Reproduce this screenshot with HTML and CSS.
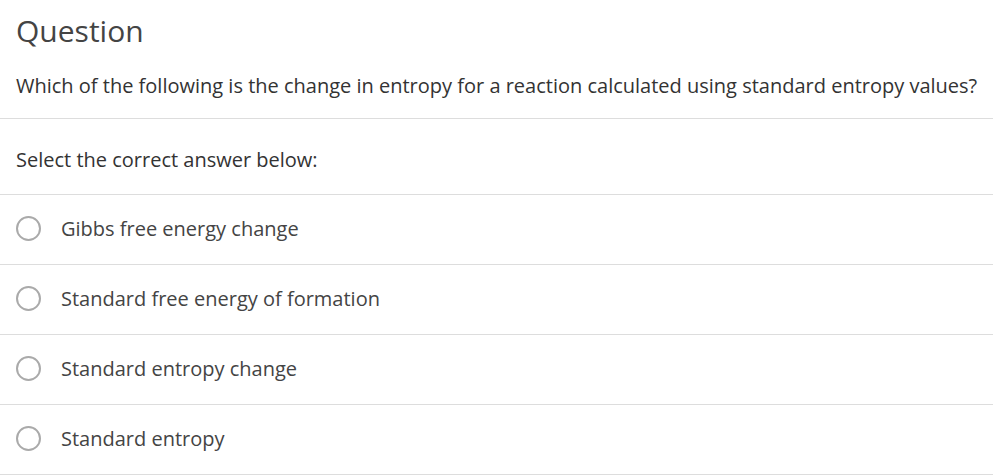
FILE: index.html
```html
<!DOCTYPE html>
<html>
<head>
<meta charset="utf-8">
<link rel="stylesheet" href="styles.css">
</head>
<body>
<div class="quiz">
  <div class="question">
    <h1 class="title">Question</h1>
    <p class="prompt">Which of the following is the change in entropy for a reaction calculated using standard entropy values?</p>
  </div>
  <div class="instructions">Select the correct answer below:</div>
  <ul class="options">
    <li class="option"><span class="radio"></span><span class="label">Gibbs free energy change</span></li>
    <li class="option"><span class="radio"></span><span class="label">Standard free energy of formation</span></li>
    <li class="option"><span class="radio"></span><span class="label">Standard entropy change</span></li>
    <li class="option"><span class="radio"></span><span class="label">Standard entropy</span></li>
  </ul>
</div>
</body>
</html>
```
FILE: styles.css
```css
html, body {
  margin: 0;
  padding: 0;
  background: #fff;
}
body {
  font-family: "Open Sans", "Liberation Sans", sans-serif;
  color: #333;
}
.quiz {
  width: 993px;
}
.question {
  border-bottom: 1px solid #ddd;
  padding: 0 0 0 16px;
  height: 118px;
  box-sizing: content-box;
}
.title {
  margin: 0;
  padding-top: 11px;
  font-size: 30px;
  font-weight: 400;
  line-height: 40px;
  color: #444;
}
.prompt {
  margin: 0;
  padding-top: 23px;
  font-size: 20px;
  line-height: 24px;
  white-space: nowrap;
  color: #333;
}
.instructions {
  border-bottom: 1px solid #ddd;
  padding: 6px 16px 0;
  box-sizing: border-box;
  height: 76px;
  display: flex;
  align-items: center;
  font-size: 20px;
  color: #333;
}
.options {
  list-style: none;
  margin: 0;
  padding: 0;
}
.option {
  border-bottom: 1px solid #ddd;
  padding: 0 16px 2px;
  box-sizing: content-box;
  height: 67px;
  display: flex;
  align-items: center;
  gap: 20px;
}
.radio {
  width: 21px;
  height: 21px;
  border: 2px solid #aaa;
  border-radius: 50%;
  flex: none;
}
.label {
  font-size: 20px;
  color: #444;
}
```
